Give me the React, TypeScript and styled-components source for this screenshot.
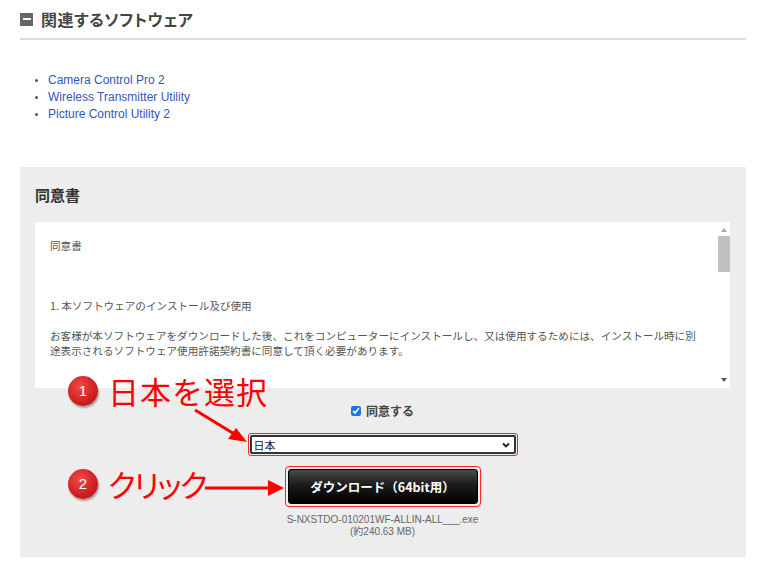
import React from 'react';
import styled, {createGlobalStyle} from 'styled-components';

const Global = createGlobalStyle`
  html, body {
    margin: 0;
    padding: 0;
    background: #fff;
  }
  body {
    font-family: "Noto Sans", "Noto Sans CJK JP", sans-serif;
    color: #333;
  }
`;

const Page = styled.div`
  width: 726px;
  padding: 0 22px 0 20px;
`;

const SectionHead = styled.h2`
  display: flex;
  align-items: center;
  gap: 8px;
  margin: 0;
  height: 38px;
  font-size: 16px;
  font-weight: bold;
  color: #444;
  border-bottom: 2px solid #dcdcdc;
  font-family: "Noto Sans CJK JP", sans-serif;
  font-feature-settings: "palt";
  letter-spacing: 0.5px;
`;

const Minus = styled.span`
  width: 13px;
  height: 13px;
  background: #666;
  display: flex;
  align-items: center;
  justify-content: center;
  &::after {
    content: '';
    width: 8px;
    height: 2px;
    background: #fff;
  }
`;

const Links = styled.ul`
  margin: 32px 0 0;
  padding: 0 0 0 28px;
  font-family: "Liberation Sans", sans-serif;
  font-size: 12px;
  line-height: 17px;
  color: #555;
  li::marker {
    font-size: 10px;
  }
`;

const Link = styled.a`
  color: #3456b8;
  text-decoration: none;
`;

const Panel = styled.section`
  position: relative;
  margin-top: 44px;
  background: #ededed;
  padding: 10px 16px 24px 15px;
  height: 356px;
`;

const PanelTitle = styled.h3`
  margin: 0 0 11px;
  height: 34px;
  display: flex;
  align-items: center;
  font-size: 15px;
  font-weight: bold;
  color: #333;
  font-family: "Noto Sans CJK JP", sans-serif;
`;

const Terms = styled.div`
  display: flex;
  background: #fff;
  height: 166px;
`;

const TermsText = styled.div`
  flex: 1;
  padding: 16px 15px 0;
  font-size: 10.6px;
  line-height: 15px;
  color: #555;
  font-family: "Noto Sans CJK JP", sans-serif;
  overflow: hidden;
  p {
    margin: 0 0 15px;
  }
  p.gap {
    margin-bottom: 45px;
  }
`;

const ScrollBar = styled.div`
  width: 13px;
  display: flex;
  flex-direction: column;
  align-items: center;
  background: #fff;
`;

const Arrow = styled.span<{$down?: boolean}>`
  width: 0;
  height: 0;
  margin: 6px 0;
  border-left: 3px solid transparent;
  border-right: 3px solid transparent;
  ${p => p.$down ? 'border-top: 4px solid #555;' : 'border-bottom: 4px solid #aaa;'}
`;

const Thumb = styled.div`
  width: 12px;
  height: 36px;
  background: #c1c1c1;
  margin-top: -2px;
`;

const Spacer = styled.div`
  flex: 1;
`;

const Form = styled.div`
  display: flex;
  flex-direction: column;
  align-items: center;
`;

const Agree = styled.label`
  display: flex;
  align-items: center;
  gap: 5px;
  margin-top: 14px;
  font-size: 12px;
  font-weight: bold;
  color: #444;
  font-family: "Noto Sans CJK JP", sans-serif;
  input {
    width: 10px;
    height: 10px;
    margin: 0;
    accent-color: #1a73e8;
  }
`;

const SelectWrap = styled.div`
  margin-top: 14px;
  padding: 1px;
  border: 1px solid #f22;
  border-radius: 3px;
`;

const Select = styled.div`
  width: 256px;
  height: 15px;
  border: 2px solid #333;
  border-radius: 2px;
  background: #fff;
  display: flex;
  align-items: center;
  justify-content: space-between;
  padding: 0 4px 0 2px;
  font-size: 11px;
  color: #222;
  font-family: "Noto Sans CJK JP", sans-serif;
`;

const ButtonWrap = styled.div`
  margin-top: 10px;
  padding: 2px;
  border: 1px solid #f22;
  border-radius: 4px;
`;

const Button = styled.button`
  width: 190px;
  height: 35px;
  border: 1px solid #000;
  border-radius: 3px;
  background: linear-gradient(#4a4a4a 0%, #1c1c1c 45%, #000 100%);
  color: #fff;
  font-size: 12.5px;
  font-weight: bold;
  font-family: "Noto Sans CJK JP", sans-serif;
  cursor: pointer;
`;

const FileInfo = styled.div`
  margin-top: 7px;
  text-align: center;
  font-size: 10px;
  line-height: 12px;
  color: #666;
  font-family: "Liberation Sans", "Noto Sans CJK JP", sans-serif;
`;

const Note = styled.div<{$top: number}>`
  position: absolute;
  left: 48px;
  top: ${p => p.$top}px;
  display: flex;
  align-items: center;
  gap: 10px;
  color: #f00;
  font-family: "Noto Sans CJK JP", sans-serif;
  font-size: 31px;
  line-height: 1;
  letter-spacing: 1px;
`;

const Tight = styled.span`
  font-feature-settings: "palt";
  letter-spacing: -2px;
`;

const Badge = styled.span`
  width: 30px;
  height: 30px;
  border-radius: 50%;
  background: radial-gradient(circle at 40% 35%, #f04a4a, #c81818 70%);
  box-shadow: 1px 2px 2px rgba(0, 0, 0, 0.35);
  color: #fff;
  font-size: 15px;
  display: flex;
  align-items: center;
  justify-content: center;
  font-family: "Liberation Sans", sans-serif;
  letter-spacing: 0;
`;

const Pointer = styled.svg`
  position: absolute;
  overflow: visible;
  left: 0;
  top: 0;
`;

export default function App() {
  return (
    <Page>
      <Global/>
      <SectionHead><Minus/>関連するソフトウェア</SectionHead>
      <Links>
        <li><Link href="#">Camera Control Pro 2</Link></li>
        <li><Link href="#">Wireless Transmitter Utility</Link></li>
        <li><Link href="#">Picture Control Utility 2</Link></li>
      </Links>
      <Panel>
        <PanelTitle>同意書</PanelTitle>
        <Terms>
          <TermsText>
            <p className="gap">同意書</p>
            <p>1. 本ソフトウェアのインストール及び使用</p>
            <p>お客様が本ソフトウェアをダウンロードした後、これをコンピューターにインストールし、又は使用するためには、インストール時に別途表示されるソフトウェア使用許諾契約書に同意して頂く必要があります。</p>
          </TermsText>
          <ScrollBar>
            <Arrow/>
            <Thumb/>
            <Spacer/>
            <Arrow $down/>
          </ScrollBar>
        </Terms>
        <Form>
          <Agree><input type="checkbox" defaultChecked/>同意する</Agree>
          <SelectWrap>
            <Select>
              日本
              <svg width="8" height="6" viewBox="0 0 8 6">
                <path d="M1 1.5 L4 4.5 L7 1.5" fill="none" stroke="#222" strokeWidth="1.8"/>
              </svg>
            </Select>
          </SelectWrap>
          <ButtonWrap>
            <Button>ダウンロード（64bit用）</Button>
          </ButtonWrap>
          <FileInfo>
            S-NXSTDO-010201WF-ALLIN-ALL___.exe<br/>(約240.63 MB)
          </FileInfo>
        </Form>
        <Note $top={208}><Badge>1</Badge>日本を選択</Note>
        <Note $top={301}><Badge>2</Badge><Tight>クリック</Tight></Note>
        <Pointer width="1" height="1">
          <line x1="175" y1="243" x2="216" y2="268" stroke="#f00" strokeWidth="3"/>
          <polygon points="227,275 208,272 216,261" fill="#f00"/>
          <line x1="185" y1="321" x2="250" y2="321" stroke="#f00" strokeWidth="3"/>
          <polygon points="264,321 248,313 248,329" fill="#f00"/>
        </Pointer>
      </Panel>
    </Page>
  );
}
